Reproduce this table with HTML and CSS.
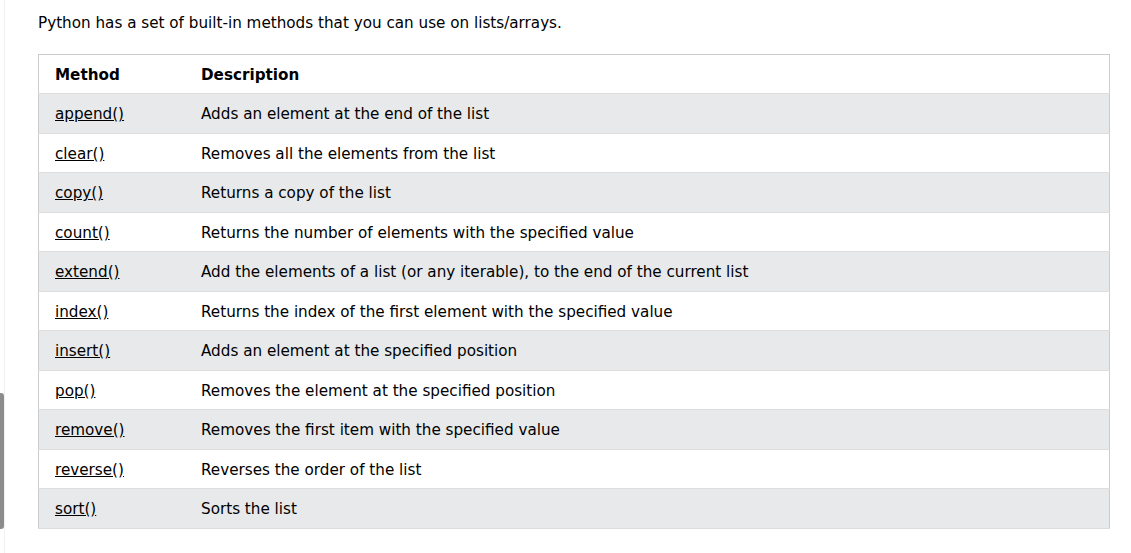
FILE: index.html
```html
<!DOCTYPE html>
<html>
<head>
<meta charset="utf-8">
<link rel="stylesheet" href="styles.css">
</head>
<body>
<div class="edge"></div>
<div class="scrollbar"></div>
<main class="content">
  <p class="intro">Python has a set of built-in methods that you can use on lists/arrays.</p>
  <table class="ref">
    <tr class="head"><th class="c1">Method</th><th>Description</th></tr>
    <tr><td class="c1"><a href="#">append()</a></td><td>Adds an element at the end of the list</td></tr>
    <tr><td class="c1"><a href="#">clear()</a></td><td>Removes all the elements from the list</td></tr>
    <tr><td class="c1"><a href="#">copy()</a></td><td>Returns a copy of the list</td></tr>
    <tr><td class="c1"><a href="#">count()</a></td><td>Returns the number of elements with the specified value</td></tr>
    <tr><td class="c1"><a href="#">extend()</a></td><td>Add the elements of a list (or any iterable), to the end of the current list</td></tr>
    <tr><td class="c1"><a href="#">index()</a></td><td>Returns the index of the first element with the specified value</td></tr>
    <tr><td class="c1"><a href="#">insert()</a></td><td>Adds an element at the specified position</td></tr>
    <tr><td class="c1"><a href="#">pop()</a></td><td>Removes the element at the specified position</td></tr>
    <tr><td class="c1"><a href="#">remove()</a></td><td>Removes the first item with the specified value</td></tr>
    <tr><td class="c1"><a href="#">reverse()</a></td><td>Reverses the order of the list</td></tr>
    <tr><td class="c1"><a href="#">sort()</a></td><td>Sorts the list</td></tr>
  </table>
</main>
</body>
</html>
```
FILE: styles.css
```css
html, body {
  margin: 0;
  padding: 0;
  background: #fff;
}
body {
  font-family: "DejaVu Sans", Verdana, sans-serif;
  font-size: 15.2px;
  color: #000;
  position: relative;
  height: 553px;
  overflow: hidden;
}
.edge {
  position: absolute;
  left: 4px;
  top: 0;
  bottom: 0;
  width: 1px;
  background: #f0f0f0;
}
.scrollbar {
  position: absolute;
  left: 0;
  top: 393px;
  width: 4px;
  height: 136px;
  background: #8c8c8c;
  border-radius: 0 3px 3px 0;
}
.content {
  padding: 12px 21px 0 38px;
}
.intro {
  margin: 0 0 19px 0;
  line-height: 22.5px;
}
.ref {
  width: 1072px;
  border-collapse: collapse;
  border: 1px solid #ccc;
}
.ref th, .ref td {
  text-align: left;
  padding: 9px 8px 7px 8px;
  line-height: 22.5px;
  vertical-align: top;
}
.ref th { font-weight: bold; }
.ref tr { border-bottom: 1px solid #ddd; }
.ref tr:nth-child(even) { background: #e7e9eb; }
.ref .c1 { width: 130px; padding-left: 16px; }
.ref a { color: #000; text-decoration: underline; }
```
